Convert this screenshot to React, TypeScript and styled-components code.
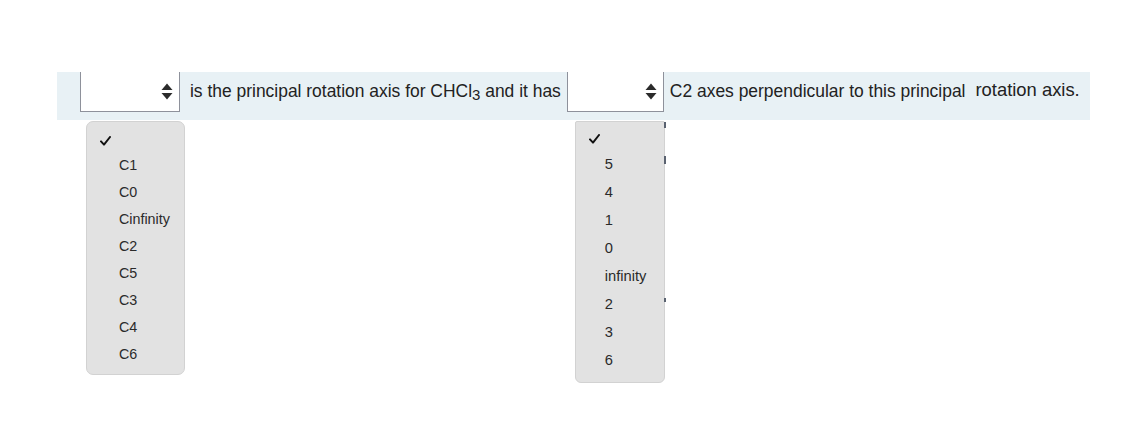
import styled, { createGlobalStyle } from 'styled-components';

const GlobalStyle = createGlobalStyle`
    html, body {
        margin: 0;
        padding: 0;
        background: #ffffff;
    }
    body {
        font-family: "Liberation Sans", Arial, Helvetica, sans-serif;
        color: #1f1f1f;
    }
`;

const Page = styled.div`
    width: 1128px;
    height: 422px;
    padding: 72px 0 0 57px;
    box-sizing: border-box;
`;

const Band = styled.div`
    width: 1033px;
    height: 48px;
    background: #e8f1f5;
    display: flex;
    align-items: flex-start;
    padding-left: 23px;
    box-sizing: border-box;
`;

const SelectWrap = styled.div`
    position: relative;
    flex: none;
`;

const SelectBox = styled.div<{ $width: number }>`
    width: ${(p) => p.$width}px;
    height: 40px;
    background: #ffffff;
    border: 1px solid #8e919b;
    border-top: none;
    box-sizing: border-box;
    display: flex;
    align-items: center;
    justify-content: flex-end;
    padding-right: 6px;
`;

const Phrase = styled.span<{ $size?: number; $gap?: number; $lift?: number }>`
    font-size: ${(p) => p.$size ?? 17.45}px;
    line-height: 38px;
    white-space: nowrap;
    margin-left: ${(p) => p.$gap ?? 10}px;
    margin-right: 6px;
    color: #222;
    position: relative;
    top: ${(p) => -(p.$lift ?? 0)}px;
`;

const Sub = styled.sub`
    font-size: 15px;
    vertical-align: -3px;
    line-height: 0;
`;

const Menu = styled.div<{ $left: number; $pad: string; $rows: number; $width: number; $radius: string }>`
    position: absolute;
    top: 49px;
    left: ${(p) => p.$left}px;
    width: ${(p) => p.$width}px;
    padding: ${(p) => p.$pad};
    background: #e2e2e2;
    border: 1px solid #d2d2d2;
    border-radius: ${(p) => p.$radius};
    box-sizing: border-box;
    display: grid;
    grid-template-rows: 22px repeat(${(p) => p.$rows}, auto);
    z-index: 2;
`;

const CheckRow = styled.div<{ $indent: number }>`
    height: 22px;
    display: flex;
    align-items: center;
    padding-left: ${(p) => p.$indent}px;
`;

const Item = styled.div<{ $indent: number; $height: number; $size: number }>`
    height: ${(p) => p.$height}px;
    line-height: ${(p) => p.$height}px;
    padding-left: ${(p) => p.$indent}px;
    font-size: ${(p) => p.$size}px;
    color: #2a2a2a;
    white-space: nowrap;
`;

const EdgeMark = styled.div<{ $top: number; $h: number }>`
    position: absolute;
    right: -2px;
    top: ${(p) => p.$top}px;
    width: 2px;
    height: ${(p) => p.$h}px;
    background: #5a6270;
`;

const Arrows = () => (
    <svg width="12" height="17" viewBox="0 0 12 17">
        <path d="M6 0.5 L11.5 7 L0.5 7 Z" fill="#2b2b2b" />
        <path d="M6 16.5 L11.5 10 L0.5 10 Z" fill="#2b2b2b" />
    </svg>
);

const Check = () => (
    <svg width="11" height="10" viewBox="0 0 11 10">
        <path d="M1 5.4 L4 8.6 L10 1" fill="none" stroke="#111" strokeWidth="2" strokeLinecap="round" strokeLinejoin="round" />
    </svg>
);

const axisOptions = ['C1', 'C0', 'Cinfinity', 'C2', 'C5', 'C3', 'C4', 'C6'];
const countOptions = ['5', '4', '1', '0', 'infinity', '2', '3', '6'];

export default function App() {
    return (
        <>
            <GlobalStyle />
            <Page>
                <Band>
                    <SelectWrap>
                        <SelectBox $width={100}>
                            <Arrows />
                        </SelectBox>
                        <Menu $left={6} $width={99} $pad="8px 0 6px" $rows={axisOptions.length} $radius="7px">
                            <CheckRow $indent={13}>
                                <Check />
                            </CheckRow>
                            {axisOptions.map((o) => (
                                <Item key={o} $indent={32} $height={27} $size={14.3}>
                                    {o}
                                </Item>
                            ))}
                        </Menu>
                    </SelectWrap>
                    <Phrase>
                        is the principal rotation axis for CHCl<Sub>3</Sub> and it has
                    </Phrase>
                    <SelectWrap>
                        <SelectBox $width={97}>
                            <Arrows />
                        </SelectBox>
                        <Menu $left={8} $width={90} $pad="6px 0 8px" $rows={countOptions.length} $radius="2px 2px 6px 6px">
                            <EdgeMark $top={0} $h={6} />
                            <EdgeMark $top={34} $h={8} />
                            <EdgeMark $top={176} $h={4} />
                            <CheckRow $indent={13}>
                                <Check />
                            </CheckRow>
                            {countOptions.map((o) => (
                                <Item key={o} $indent={29} $height={28} $size={14.7}>
                                    {o}
                                </Item>
                            ))}
                        </Menu>
                    </SelectWrap>
                    <Phrase $gap={6}>C2 axes perpendicular to this principal</Phrase>
                    <Phrase $size={18.4} $gap={4} $lift={1}>rotation axis.</Phrase>
                </Band>
            </Page>
        </>
    );
}
